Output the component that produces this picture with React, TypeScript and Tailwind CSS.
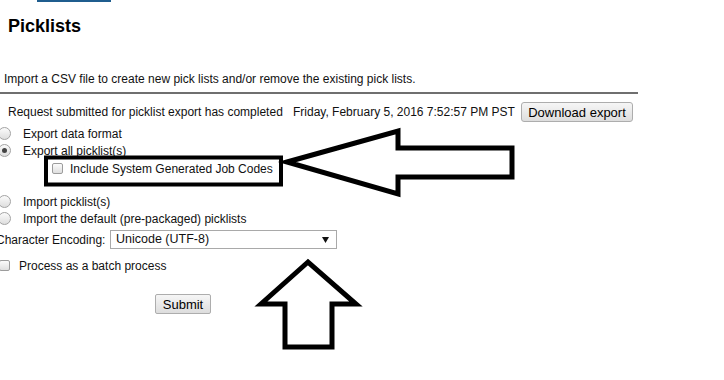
import React from 'react';

function Radio({ checked }: { checked?: boolean }) {
  return (
    <span className="ml-[-2px] flex h-[13px] w-[13px] shrink-0 items-center justify-center rounded-full border border-[#a3a3a3] bg-gradient-to-b from-[#fbfbfb] to-[#dedede]">
      {checked && <span className="h-[5px] w-[5px] rounded-full bg-[#444]" />}
    </span>
  );
}

function Checkbox() {
  return <span className="block h-[11px] w-[11px] shrink-0 rounded-[2px] border border-[#9c9c9c] bg-gradient-to-b from-[#fbfbfb] to-[#dfdfdf]" />;
}

export default function App() {
  return (
    <div className="relative h-[380px] w-[724px] overflow-hidden bg-white text-[12px] text-[#111]" style={{ fontFamily: '"Liberation Sans", Arial, sans-serif' }}>
      <div className="ml-[37px] h-[2px] w-[74px] bg-[#1f5d8e]" />

      <h1 className="ml-[8px] mt-[14px] text-[18px] font-bold leading-[20px] text-black">Picklists</h1>

      <p className="ml-[4px] mt-[36px] leading-[14px]">Import a CSV file to create new pick lists and/or remove the existing pick lists.</p>

      <div className="mt-[6px] h-[2px] w-[638px] bg-[#6f6f6f]" />

      <div className="mt-[8px] flex h-[20px] items-center">
        <span className="ml-[8px] w-[285px] whitespace-nowrap">Request submitted for picklist export has completed</span>
        <span className="w-[228px] whitespace-nowrap">Friday, February 5, 2016 7:52:57 PM PST</span>
        <button className="h-[20px] w-[112px] rounded-[3px] border border-[#adadad] bg-gradient-to-b from-[#f6f6f6] to-[#dddddd] text-[13px] leading-none text-black">
          Download export
        </button>
      </div>

      <div className="mt-[3px]">
        <label className="flex h-[17px] items-center">
          <Radio />
          <span className="ml-[12px]">Export data format</span>
        </label>
        <label className="flex h-[17px] items-center">
          <Radio checked />
          <span className="ml-[12px]">Export all picklist(s)</span>
        </label>
        <label className="flex h-[19px] items-center pl-[52px]">
          <Checkbox />
          <span className="ml-[7px]">Include System Generated Job Codes</span>
        </label>
      </div>

      <div className="mt-[15px]">
        <label className="flex h-[17px] items-center">
          <Radio />
          <span className="ml-[12px]">Import picklist(s)</span>
        </label>
        <label className="flex h-[17px] items-center">
          <Radio />
          <span className="ml-[12px]">Import the default (pre-packaged) picklists</span>
        </label>
      </div>

      <div className="mt-[3px] flex h-[19px] items-center">
        <span className="ml-[-4px] w-[114px] whitespace-nowrap">Character Encoding:</span>
        <div className="flex h-[19px] w-[227px] items-center justify-between border border-[#a9a9a9] bg-white pl-[5px] pr-[7px]">
          <span className="text-[12.5px]">Unicode (UTF-8)</span>
          <svg width="7" height="6" viewBox="0 0 7 6">
            <path d="M0 0 L7 0 L3.5 6 Z" fill="#111" />
          </svg>
        </div>
      </div>

      <label className="mt-[8px] flex h-[17px] items-center">
        <span className="ml-[-1px]">
          <Checkbox />
        </span>
        <span className="ml-[9px]">Process as a batch process</span>
      </label>

      <button className="ml-[155px] mt-[20px] h-[20px] w-[56px] rounded-[2px] border border-[#adadad] bg-gradient-to-b from-[#f6f6f6] to-[#dddddd] text-[13px] leading-none text-black">
        Submit
      </button>

      {/* annotation overlay */}
      <svg className="pointer-events-none absolute left-0 top-0" width="724" height="380" viewBox="0 0 724 380">
        <rect x="46" y="157.5" width="235" height="27" fill="none" stroke="#000" strokeWidth="4" />
        <polygon points="287,162 398,131 398,148 512,148 512,177 398,177 398,194" fill="none" stroke="#000" strokeWidth="5" strokeLinejoin="miter" />
        <polygon points="308,262 261,304 285,304 285,347 332,347 332,304 356,304" fill="none" stroke="#000" strokeWidth="5" strokeLinejoin="miter" />
      </svg>
    </div>
  );
}
